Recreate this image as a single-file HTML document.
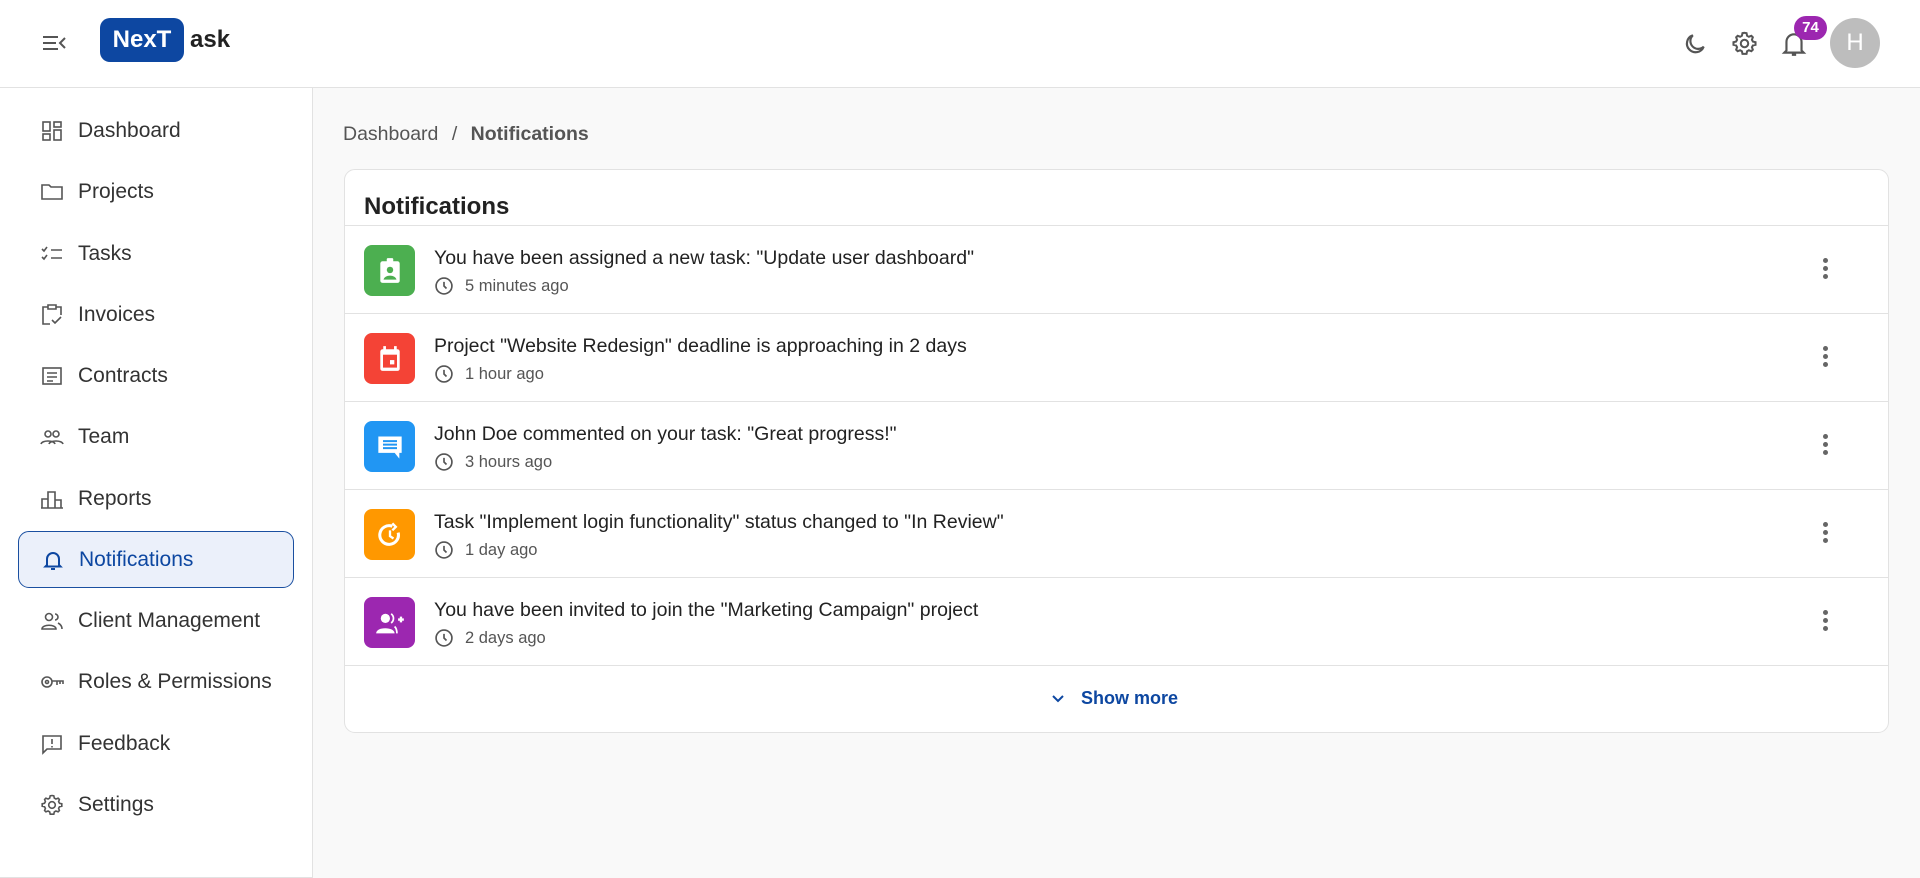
<!DOCTYPE html>
<html><head><meta charset="utf-8"><style>
*{box-sizing:border-box;margin:0;padding:0}
body{width:1920px;height:878px;overflow:hidden;background:#f9f9f9;font-family:"Liberation Sans",sans-serif;color:#222;position:relative}
.hdr{position:absolute;left:0;top:0;width:1920px;height:88px;background:#fff;border-bottom:1px solid #e2e2e2}
.side{position:absolute;left:0;top:88px;width:313px;height:790px;background:#fff;border-right:1px solid #e2e2e2;border-bottom:1px solid #e2e2e2}
.item{position:absolute;left:18px;width:276px;height:57px;display:flex;align-items:center;font-size:21px;color:#333}
.item svg{position:absolute;left:22px;width:24px;height:24px}
.item span{position:absolute;left:60px}
.item.act{background:#ebf0fa;border:1px solid #1a4fa0;border-radius:11px;color:#0d47a1}
.card{position:absolute;left:344px;top:169px;width:1545px;height:564px;background:#fff;border:1px solid #e2e2e2;border-radius:11px;overflow:hidden}
.row{position:absolute;left:0;width:100%;height:88px;border-top:1px solid #e2e2e2}
.ic{position:absolute;left:19px;top:19px;width:51px;height:51px;border-radius:8px;display:flex;align-items:center;justify-content:center}
.t{position:absolute;left:89px;top:21px;font-size:19.5px;color:#222}
.tm{position:absolute;left:89px;top:50px;font-size:16.5px;color:#555;display:flex;align-items:center}
.tm svg{margin-right:11px}
.keb{position:absolute;left:1478px;top:32px;width:6px}
.keb i{display:block;width:5px;height:5px;border-radius:50%;background:#666;margin-bottom:3px}
</style></head><body>
<div class="hdr">
 <svg style="position:absolute;left:42px;top:33px" width="26" height="20" viewBox="0 0 26 20"><path d="M1 4h15M1 10h13M1 16h15M23 5l-5 5 5 5" stroke="#555" stroke-width="2" fill="none"/></svg>
 <div style="position:absolute;left:100px;top:18px;width:84px;height:44px;background:#0d47a1;border-radius:10px;color:#fff;font-weight:bold;font-size:24px;line-height:44px;text-align:center">NexT</div>
 <div style="position:absolute;left:190px;top:18px;font-weight:bold;font-size:24px;line-height:44px;color:#222">ask</div>
 <svg style="position:absolute;left:1682px;top:31px" width="26" height="26" viewBox="0 0 24 24"><path d="M20 14.5A8 8 0 1 1 10 4a6.5 6.5 0 0 0 10 10.5z" stroke="#555" stroke-width="2" fill="none"/></svg>
 <svg style="position:absolute;left:1731px;top:30px" width="27" height="27" viewBox="0 0 24 24"><path d="M12 2.5l1.8.3.5 2.3 1.6.9 2.2-.8 1.3 1.3-.8 2.2.9 1.6 2.3.5v2.4l-2.3.5-.9 1.6.8 2.2-1.3 1.3-2.2-.8-1.6.9-.5 2.3H10.2l-.5-2.3-1.6-.9-2.2.8-1.3-1.3.8-2.2-.9-1.6-2.3-.5v-2.4l2.3-.5.9-1.6-.8-2.2 1.3-1.3 2.2.8 1.6-.9.5-2.3z" stroke="#555" stroke-width="1.8" fill="none"/><circle cx="12" cy="12" r="3.3" stroke="#555" stroke-width="1.8" fill="none"/></svg>
 <svg style="position:absolute;left:1781px;top:30px" width="26" height="28" viewBox="0 0 24 26"><path d="M5 19V11a7 7 0 0 1 14 0v8l2 2H3zM10 23h4" stroke="#555" stroke-width="2" fill="none"/></svg>
 <div style="position:absolute;left:1794px;top:16px;width:33px;height:24px;border-radius:12px;background:#9c27b0;color:#fff;font-size:15px;font-weight:bold;text-align:center;line-height:24px">74</div>
 <div style="position:absolute;left:1830px;top:18px;width:50px;height:50px;border-radius:50%;background:#bdbdbd;color:#fff;font-size:24px;text-align:center;line-height:50px">H</div>
</div>
<div class="side">
 <div class="item" style="top:14px"><svg viewBox="0 0 24 24" fill="none" stroke="#555" stroke-width="1.6"><rect x="3" y="3" width="7" height="9"/><rect x="14" y="3" width="7" height="5"/><rect x="14" y="11" width="7" height="10"/><rect x="3" y="15" width="7" height="6"/></svg><span>Dashboard</span></div>
 <div class="item" style="top:75px"><svg viewBox="0 0 24 24" fill="none" stroke="#555" stroke-width="1.6"><path d="M2 5h7l2 2h11v12H2z"/></svg><span>Projects</span></div>
 <div class="item" style="top:137px"><svg viewBox="0 0 24 24" fill="none" stroke="#555" stroke-width="1.6"><path d="M2 7l2 2 3-4M2 15l2 2 3-4M11 8h11M11 16h11"/></svg><span>Tasks</span></div>
 <div class="item" style="top:198px"><svg viewBox="0 0 24 24" fill="none" stroke="#555" stroke-width="1.6"><path d="M8 4H3v17h7M16 4h5v8M8 2h8v4H8zM12 17l3 3 6-6"/></svg><span>Invoices</span></div>
 <div class="item" style="top:259px"><svg viewBox="0 0 24 24" fill="none" stroke="#555" stroke-width="1.6"><rect x="3" y="4" width="18" height="16"/><path d="M7 9h10M7 13h10M7 17h6"/></svg><span>Contracts</span></div>
 <div class="item" style="top:320px"><svg viewBox="0 0 24 24" fill="none" stroke="#555" stroke-width="1.6"><circle cx="8" cy="9" r="3"/><circle cx="16" cy="9" r="3"/><path d="M1 19c1-4 13-4 14 0M9 19c1-4 13-4 14 0"/></svg><span>Team</span></div>
 <div class="item" style="top:382px"><svg viewBox="0 0 24 24" fill="none" stroke="#555" stroke-width="1.6"><path d="M2 21V12h6V21M8 21V5h7v16M15 21v-8h6v8zM1 21h22"/></svg><span>Reports</span></div>
 <div class="item act" style="top:443px"><svg viewBox="0 0 24 24" fill="none" stroke="#0d47a1" stroke-width="2"><path d="M6 17v-6a6 6 0 0 1 12 0v6l1.5 1.5h-15zM10 21h4"/></svg><span>Notifications</span></div>
 <div class="item" style="top:504px"><svg viewBox="0 0 24 24" fill="none" stroke="#555" stroke-width="1.6"><circle cx="9" cy="8" r="3.5"/><path d="M2 20c0-5 14-5 14 0zM15 5a3 3 0 0 1 0 6M18 14c2 1 4 3 4 6"/></svg><span>Client Management</span></div>
 <div class="item" style="top:565px"><svg viewBox="0 0 24 24" fill="none" stroke="#555" stroke-width="1.6"><circle cx="7" cy="12" r="5"/><circle cx="7" cy="12" r="1.5"/><path d="M12 11h11v3M17 11v4M20 11v3"/></svg><span>Roles &amp; Permissions</span></div>
 <div class="item" style="top:627px"><svg viewBox="0 0 24 24" fill="none" stroke="#555" stroke-width="1.6"><path d="M3 4h18v13H7l-4 4zM12 7v5M12 14v1.5"/></svg><span>Feedback</span></div>
 <div class="item" style="top:688px"><svg viewBox="0 0 24 24" fill="none" stroke="#555" stroke-width="1.6"><path d="M12 2.5l1.8.3.5 2.3 1.6.9 2.2-.8 1.3 1.3-.8 2.2.9 1.6 2.3.5v2.4l-2.3.5-.9 1.6.8 2.2-1.3 1.3-2.2-.8-1.6.9-.5 2.3H10.2l-.5-2.3-1.6-.9-2.2.8-1.3-1.3.8-2.2-.9-1.6-2.3-.5v-2.4l2.3-.5.9-1.6-.8-2.2 1.3-1.3 2.2.8 1.6-.9.5-2.3z"/><circle cx="12" cy="12" r="3.3"/></svg><span>Settings</span></div>
</div>
<div style="position:absolute;left:343px;top:123px;font-size:19.5px;color:#555">Dashboard <span style="margin:0 8px">/</span> <b style="color:#555">Notifications</b></div>
<div class="card">
 <div style="position:absolute;left:19px;top:23px;font-size:24px;font-weight:bold;color:#222">Notifications</div>
 <div class="row" style="top:55px"><div class="ic" style="background:#4caf50"><svg width="26" height="28" viewBox="0 0 24 26"><rect x="3" y="4" width="18" height="20" rx="2" fill="#fff"/><rect x="9" y="1" width="6" height="5" rx="1" fill="#fff"/><circle cx="12" cy="12" r="3" fill="#4caf50"/><path d="M6 21c1-5 11-5 12 0z" fill="#4caf50"/></svg></div><div class="t">You have been assigned a new task: "Update user dashboard"</div><div class="tm"><svg width="20" height="20" viewBox="0 0 24 24" fill="none" stroke="#555" stroke-width="2"><circle cx="12" cy="12" r="9.5"/><path d="M12 7v5l3 3"/></svg>5 minutes ago</div><div class="keb"><i></i><i></i><i></i></div></div>
 <div class="row" style="top:143px"><div class="ic" style="background:#f44336"><svg width="26" height="28" viewBox="0 0 24 26"><path d="M7 1v4M17 1v4" stroke="#fff" stroke-width="2.5"/><rect x="3" y="4" width="18" height="20" rx="2" fill="#fff"/><rect x="5.5" y="9" width="13" height="12" fill="#f44336"/><rect x="12" y="14" width="4" height="4" fill="#fff"/></svg></div><div class="t">Project "Website Redesign" deadline is approaching in 2 days</div><div class="tm"><svg width="20" height="20" viewBox="0 0 24 24" fill="none" stroke="#555" stroke-width="2"><circle cx="12" cy="12" r="9.5"/><path d="M12 7v5l3 3"/></svg>1 hour ago</div><div class="keb"><i></i><i></i><i></i></div></div>
 <div class="row" style="top:231px"><div class="ic" style="background:#2196f3"><svg width="28" height="28" viewBox="0 0 24 24"><path d="M2 3h20v14h-2v5l-4-5H2z" fill="#fff"/><path d="M6 7h12M6 10h12M6 13h12" stroke="#2196f3" stroke-width="1.7"/></svg></div><div class="t">John Doe commented on your task: "Great progress!"</div><div class="tm"><svg width="20" height="20" viewBox="0 0 24 24" fill="none" stroke="#555" stroke-width="2"><circle cx="12" cy="12" r="9.5"/><path d="M12 7v5l3 3"/></svg>3 hours ago</div><div class="keb"><i></i><i></i><i></i></div></div>
 <div class="row" style="top:319px"><div class="ic" style="background:#ff9800"><svg width="28" height="28" viewBox="0 0 24 24" fill="none" stroke="#fff" stroke-width="2.6"><path d="M19 10A8 8 0 1 1 14 4.5"/><path d="M12 8v5l3 2" stroke-width="2"/><path d="M14 2l3 3-3 3" stroke-width="2"/></svg></div><div class="t">Task "Implement login functionality" status changed to "In Review"</div><div class="tm"><svg width="20" height="20" viewBox="0 0 24 24" fill="none" stroke="#555" stroke-width="2"><circle cx="12" cy="12" r="9.5"/><path d="M12 7v5l3 3"/></svg>1 day ago</div><div class="keb"><i></i><i></i><i></i></div></div>
 <div class="row" style="top:407px"><div class="ic" style="background:#9c27b0"><svg width="30" height="28" viewBox="0 0 26 24" fill="#fff"><circle cx="9" cy="8" r="4"/><path d="M1 21c0-6 16-6 16 0z"/><path d="M14 4a5 5 0 0 1 0 8M17 15c1 1 2 3 2 6" stroke="#fff" stroke-width="1.5" fill="none"/><path d="M20 9h5M22.5 6.5v5" stroke="#fff" stroke-width="2"/></svg></div><div class="t">You have been invited to join the "Marketing Campaign" project</div><div class="tm"><svg width="20" height="20" viewBox="0 0 24 24" fill="none" stroke="#555" stroke-width="2"><circle cx="12" cy="12" r="9.5"/><path d="M12 7v5l3 3"/></svg>2 days ago</div><div class="keb"><i></i><i></i><i></i></div></div>
 <div class="row" style="top:495px;height:70px"><div style="position:absolute;left:706px;top:22px;font-size:18px;font-weight:bold;color:#0d47a1;display:flex;align-items:center"><svg width="14" height="10" viewBox="0 0 14 10" style="margin-right:16px"><path d="M2 2l5 5 5-5" stroke="#0d47a1" stroke-width="2" fill="none"/></svg>Show more</div></div>
</div>
</body></html>
